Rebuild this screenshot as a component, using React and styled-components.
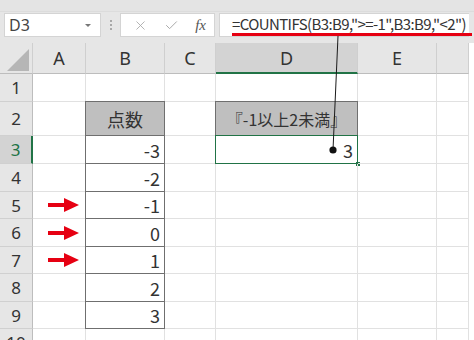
import styled, { createGlobalStyle } from "styled-components";
import { X, Check } from "lucide-react";

const GlobalStyle = createGlobalStyle`
  html, body {
    margin: 0;
    padding: 0;
    background: #ffffff;
  }
  body {
    font-family: "Noto Sans CJK JP", "Noto Sans", sans-serif;
    color: #333;
  }
`;

const COLS = [33, 53, 79, 51, 142, 79, 32];
const ROWS = [28, 34, 28, 28, 27, 28, 27, 28, 27, 28];
const LETTERS = ["A", "B", "C", "D", "E", ""];

const values = {
  2: { B: "点数", D: "『-1以上2未満』" },
  3: { B: "-3", D: "3" },
  4: { B: "-2" },
  5: { B: "-1" },
  6: { B: "0" },
  7: { B: "1" },
  8: { B: "2" },
  9: { B: "3" },
};

const arrowRows = [5, 6, 7];

export default function App() {
  return (
    <>
      <GlobalStyle />
      <Window>
        <Ribbon />
        <FormulaRow>
          <NameBox>
            <span>D3</span>
            <Caret />
          </NameBox>
          <Grip>
            <i />
            <i />
            <i />
          </Grip>
          <FuncBox>
            <X size={15} strokeWidth={1.4} color="#a9a9a9" />
            <Check size={15} strokeWidth={1.6} color="#a9a9a9" />
            <Fx>fx</Fx>
          </FuncBox>
          <FormulaBox>=COUNTIFS(B3:B9,"&gt;=-1",B3:B9,"&lt;2")</FormulaBox>
        </FormulaRow>

        <Sheet>
          <Corner />
          {LETTERS.map((l, i) => (
            <ColHead key={i} $active={l === "D"}>
              {l}
            </ColHead>
          ))}
          {ROWS.map((h, r) => {
            const row = r + 1;
            const data = values[row] || {};
            return [
              <RowHead key={`h${row}`} $active={row === 3}>
                {row}
              </RowHead>,
              <Cell key={`a${row}`}>
                {arrowRows.includes(row) && <RedArrow />}
              </Cell>,
              <Cell
                key={`b${row}`}
                $boxed={row >= 2 && row <= 9}
                $fill={row === 2}
                $center={row === 2}
              >
                {data.B}
              </Cell>,
              <Cell key={`c${row}`} />,
              <Cell
                key={`d${row}`}
                $boxed={row === 2 || row === 3}
                $fill={row === 2}
                $center={row === 2}
                $selected={row === 3}
                $small={row === 2}
              >
                {data.D}
              </Cell>,
              <Cell key={`e${row}`} />,
              <Cell key={`f${row}`} />,
            ];
          })}
        </Sheet>

        <Overlay width="474" height="340" viewBox="0 0 474 340">
          <line x1="232" y1="34.5" x2="472" y2="34.5" stroke="#e60012" strokeWidth="3" />
          <line x1="338" y1="36" x2="333" y2="150" stroke="#1a1a1a" strokeWidth="1" />
          <circle cx="333" cy="150" r="3.6" fill="#111" />
        </Overlay>
      </Window>
    </>
  );
}

function RedArrow() {
  return (
    <ArrowSvg width="31" height="14" viewBox="0 0 31 14">
      <rect x="0" y="5" width="17" height="4" fill="#e60012" />
      <polygon points="16,0 31,7 16,14" fill="#e60012" />
    </ArrowSvg>
  );
}

const Window = styled.div`
  position: relative;
  width: 474px;
  height: 340px;
  overflow: hidden;
  background: #ffffff;
`;

const Ribbon = styled.div`
  height: 12px;
  background: #e4e4e4;
  border-bottom: 1px solid #dcdcdc;
  box-sizing: border-box;
`;

const FormulaRow = styled.div`
  height: 31px;
  box-sizing: border-box;
  padding: 1px 5px 6px 4px;
  background: #e6e6e6;
  display: flex;
  align-items: stretch;
`;

const NameBox = styled.div`
  width: 97px;
  box-sizing: border-box;
  background: #fff;
  border: 1px solid #d4d4d4;
  display: flex;
  align-items: center;
  justify-content: space-between;
  padding: 0 9px 0 4px;
  font-size: 16px;
  color: #444;
  font-family: "Noto Sans", sans-serif;
`;

const Caret = styled.span`
  width: 0;
  height: 0;
  border-left: 3px solid transparent;
  border-right: 3px solid transparent;
  border-top: 3px solid #777;
`;

const Grip = styled.div`
  width: 19px;
  display: flex;
  flex-direction: column;
  align-items: center;
  justify-content: center;
  gap: 2px;

  i {
    width: 2px;
    height: 2px;
    background: #a8a8a8;
  }
`;

const FuncBox = styled.div`
  width: 95px;
  box-sizing: border-box;
  background: #fff;
  border: 1px solid #d4d4d4;
  display: flex;
  align-items: center;
  justify-content: space-between;
  padding: 0 8px 0 12px;
`;

const Fx = styled.span`
  font-family: "Liberation Serif", serif;
  font-style: italic;
  font-size: 15px;
  color: #555;
`;

const FormulaBox = styled.div`
  flex: 1;
  margin-left: 4px;
  background: #fff;
  border: 1px solid #d4d4d4;
  border-right: none;
  display: flex;
  align-items: center;
  padding: 0 0 4px 12px;
  font-size: 15px;
  letter-spacing: -0.6px;
  color: #333;
  white-space: nowrap;
  overflow: hidden;
`;

const Sheet = styled.div`
  display: grid;
  width: 469px;
  grid-template-columns: ${COLS.map((c) => `${c}px`).join(" ")};
  grid-template-rows: 31px ${ROWS.map((r) => `${r}px`).join(" ")};
`;

const Corner = styled.div`
  position: relative;
  background: #e6e6e6;
  border-right: 1px solid #cfcfcf;
  border-bottom: 1px solid #bdbdbd;

  &::after {
    content: "";
    position: absolute;
    right: 3px;
    bottom: 2px;
    width: 0;
    height: 0;
    border-left: 22px solid transparent;
    border-bottom: 22px solid #b6b6b6;
  }
`;

const ColHead = styled.div`
  box-sizing: border-box;
  background: ${(p) => (p.$active ? "#d3d3d3" : "#e6e6e6")};
  border-right: 1px solid #cfcfcf;
  border-bottom: ${(p) => (p.$active ? "2px solid #217346" : "1px solid #bdbdbd")};
  display: flex;
  align-items: center;
  justify-content: center;
  font-size: 18px;
  color: #333;
  font-family: "Noto Sans", sans-serif;
`;

const RowHead = styled.div`
  box-sizing: border-box;
  background: ${(p) => (p.$active ? "#d3d3d3" : "#e6e6e6")};
  border-right: ${(p) => (p.$active ? "2px solid #217346" : "1px solid #bdbdbd")};
  border-bottom: 1px solid #d0d0d0;
  display: flex;
  align-items: center;
  justify-content: center;
  font-size: 17px;
  color: ${(p) => (p.$active ? "#217346" : "#333")};
  font-family: "Noto Sans", sans-serif;
`;

const Cell = styled.div`
  position: relative;
  box-sizing: border-box;
  border-right: 1px solid #e1e1e1;
  border-bottom: 1px solid #e1e1e1;
  background: ${(p) => (p.$fill ? "#bfbfbf" : "transparent")};
  display: flex;
  align-items: center;
  justify-content: ${(p) => (p.$center ? "center" : "flex-end")};
  padding-right: ${(p) => (p.$center ? "0" : "4px")};
  font-size: ${(p) => (p.$small ? "16px" : "18px")};
  color: #333;
  white-space: nowrap;

  &::before {
    content: "";
    display: ${(p) => (p.$boxed ? "block" : "none")};
    position: absolute;
    top: -1px;
    left: -1px;
    right: -1px;
    bottom: -1px;
    border: 1px solid ${(p) => (p.$selected ? "#217346" : "#6f6f6f")};
    pointer-events: none;
  }

  &::after {
    content: "";
    display: ${(p) => (p.$selected ? "block" : "none")};
    position: absolute;
    right: -3px;
    bottom: -3px;
    width: 4px;
    height: 4px;
    background: #217346;
  }
`;

const ArrowSvg = styled.svg`
  margin-right: 2px;
`;

const Overlay = styled.svg`
  position: absolute;
  left: 0;
  top: 0;
  pointer-events: none;
`;
